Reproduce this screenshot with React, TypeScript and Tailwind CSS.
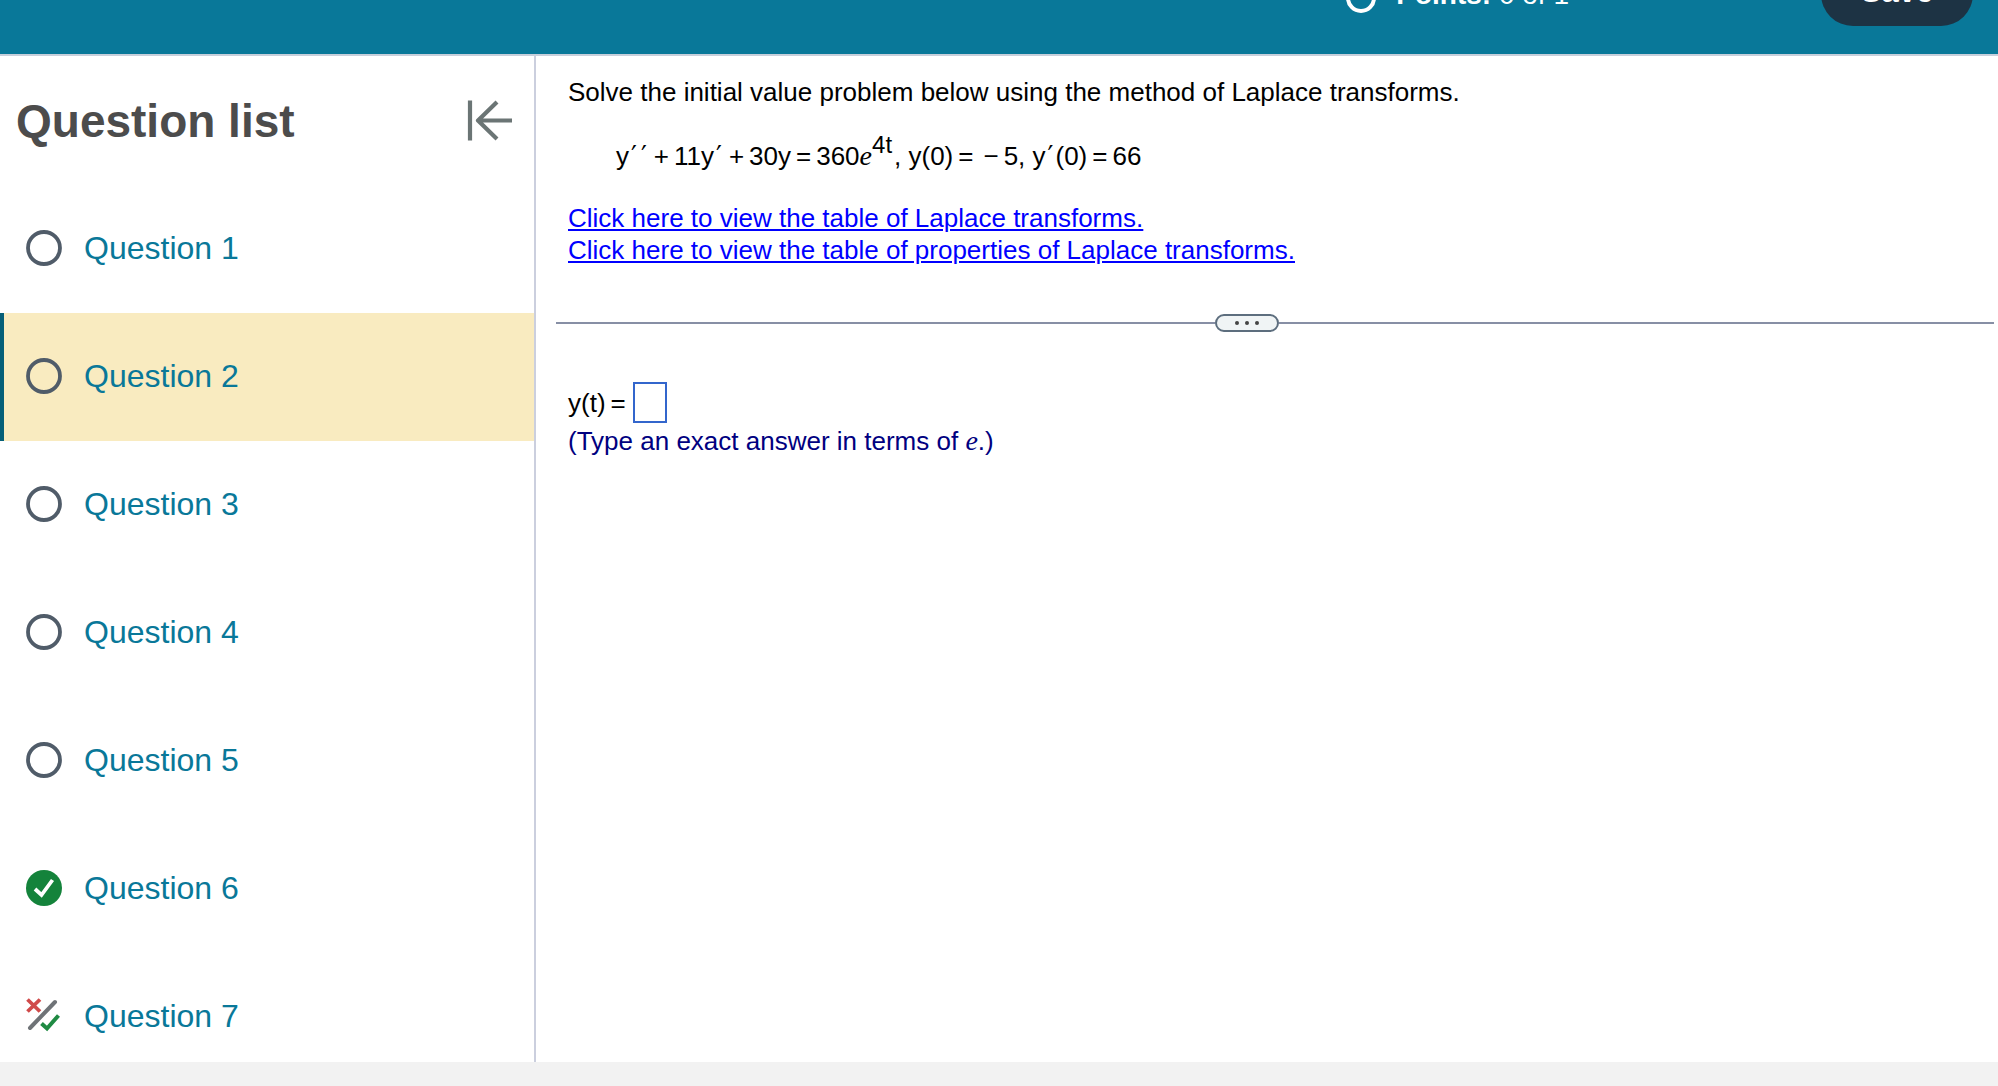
import { useState, type ReactNode } from "react";

type Status = "open" | "correct" | "partial";

interface QuestionProps {
  id: number;
  status: Status;
}

const questions: QuestionProps[] = [
  { id: 1, status: "open" },
  { id: 2, status: "open" },
  { id: 3, status: "open" },
  { id: 4, status: "open" },
  { id: 5, status: "open" },
  { id: 6, status: "correct" },
  { id: 7, status: "partial" },
];

function StatusIcon({ status }: { status: Status }) {
  if (status === "correct") {
    return (
      <svg className="size-9 shrink-0" viewBox="0 0 36 36" fill="none">
        <circle cx="18" cy="18" r="18" fill="#14833b" />
        <path d="M9 19L15.5 25L26.5 10" stroke="#fff" strokeWidth="3.8" />
      </svg>
    );
  }
  if (status === "partial") {
    return (
      <svg className="size-9 shrink-0" viewBox="0 0 36 36" fill="none">
        <path d="M1.5 1.5L14 13.5M14 1.5L1.5 13.5" stroke="#d04a4a" strokeWidth="3.8" />
        <path d="M4 30L29 4" stroke="#6f7377" strokeWidth="4" strokeLinecap="round" />
        <path d="M15.5 25.5L21 30.5L32.5 17.5" stroke="#1f8a43" strokeWidth="4" />
      </svg>
    );
  }
  return (
    <svg className="size-9 shrink-0" viewBox="0 0 36 36" fill="none">
      <circle cx="18" cy="18" r="16" stroke="#505c69" strokeWidth="3.8" />
    </svg>
  );
}

// Operator inside a formula, with the thin gap on both sides
function Op({ children }: { children: ReactNode }) {
  return <span className="mx-[5px]">{children}</span>;
}

function Prime() {
  return <span className="px-0.5 font-['DejaVu_Sans',sans-serif]">′</span>;
}

function Euler() {
  return <i className="font-['Liberation_Serif',serif] text-[28px] leading-none">e</i>;
}

function Header() {
  return (
    <header className="flex h-14 shrink-0 items-end justify-end overflow-hidden border-b-2 border-[#c7cfdb] bg-[#097899] pr-[25px] text-white">
      <svg className="mb-[41px] size-[30px]" viewBox="0 0 30 30" fill="none">
        <circle cx="15" cy="15" r="13" stroke="#fff" strokeWidth="4" />
      </svg>
      <p className="mr-[252px] mb-[43px] ml-5 text-[28px] leading-8">
        <strong>Points:</strong> 0 of 1
      </p>
      <button
        type="button"
        className="mb-7 h-16 w-[152px] rounded-full bg-[#1d3344] pb-1 text-[31px] leading-8 font-bold"
      >
        Save
      </button>
    </header>
  );
}

function QuestionList() {
  const [current, setCurrent] = useState(2);

  return (
    <aside className="w-[536px] shrink-0 overflow-hidden border-r-2 border-[#cbcfde]">
      <div className="flex h-[129px] items-center justify-between pr-[22px] pl-4">
        <h2 className="pt-0.5 text-[46px] font-bold text-[#4c4c4c]">Question list</h2>
        <button type="button" aria-label="Collapse question list">
          <svg className="h-11 w-[46px]" viewBox="0 0 46 44" fill="none" stroke="#6b7575" strokeWidth="4.2">
            <path d="M4 1.5V41.5M46 21.5H12M31 3L12 21.5L31 40" strokeLinejoin="round" />
          </svg>
        </button>
      </div>
      <ul>
        {questions.map(({ id, status }) => (
          <li key={id}>
            <button
              type="button"
              onClick={() => setCurrent(id)}
              className={
                id === current
                  ? "flex h-32 w-full items-center gap-[22px] border-l-4 border-[#065f78] bg-[#f9ebc0] pb-0.5 pl-[22px]"
                  : "flex h-32 w-full items-center gap-[22px] border-l-4 border-transparent pb-0.5 pl-[22px]"
              }
            >
              <StatusIcon status={status} />
              <span className="text-[32px] text-[#097899]">Question {id}</span>
            </button>
          </li>
        ))}
      </ul>
    </aside>
  );
}

function Divider() {
  return (
    <div className="flex items-center pr-1 pl-5">
      <div className="h-[2px] flex-1 bg-[#878fa5]" />
      <button
        type="button"
        aria-label="Resize panels"
        className="flex h-[18px] w-16 items-center justify-center gap-[6px] rounded-full border-2 border-[#5d6e7e] bg-[#f0f4f5]"
      >
        <span className="size-1 rounded-full bg-[#444]" />
        <span className="size-1 rounded-full bg-[#444]" />
        <span className="size-1 rounded-full bg-[#444]" />
      </button>
      <div className="h-[2px] flex-[1.085] bg-[#878fa5]" />
    </div>
  );
}

function Exercise() {
  const [answer, setAnswer] = useState("");

  return (
    <main className="min-w-0 flex-1 text-[26px] leading-8 text-black">
      <section className="px-8 pt-5">
        <p>Solve the initial value problem below using the method of Laplace transforms.</p>
        <p className="mt-8 pl-12">
          y<Prime />
          <Prime />
          <Op>+</Op>11y
          <Prime />
          <Op>+</Op>30y<Op>=</Op>360
          <Euler />
          <sup className="mr-0.5 text-[24px]">4t</sup>, y(0)<Op>=</Op>
          <Op>−</Op>5, y<Prime />
          (0)<Op>=</Op>66
        </p>
        <div className="mt-[30px] flex flex-col items-start text-[#0000ff] underline">
          <a href="#transforms">Click here to view the table of Laplace transforms.</a>
          <a href="#properties">Click here to view the table of properties of Laplace transforms.</a>
        </div>
      </section>
      <div className="py-12">
        <Divider />
      </div>
      <section className="px-8 pt-0.5">
        <div className="flex items-center gap-[7px]">
          <label htmlFor="answer">
            y(t)<span className="ml-[5px]">=</span>
          </label>
          <input
            id="answer"
            type="text"
            value={answer}
            onChange={(e) => setAnswer(e.target.value)}
            className="h-[41px] w-[34px] border-2 border-[#3366cc] bg-white outline-none"
          />
        </div>
        <p className="mt-0.5 text-[#000080]">
          (Type an exact answer in terms of <Euler />
          .)
        </p>
      </section>
    </main>
  );
}

export default function App() {
  return (
    <div className="flex h-screen flex-col overflow-hidden bg-white font-['Liberation_Sans',Arial,sans-serif]">
      <Header />
      <div className="flex min-h-0 flex-1">
        <QuestionList />
        <Exercise />
      </div>
      <footer className="h-6 shrink-0 bg-[#f2f2f2]" />
    </div>
  );
}
